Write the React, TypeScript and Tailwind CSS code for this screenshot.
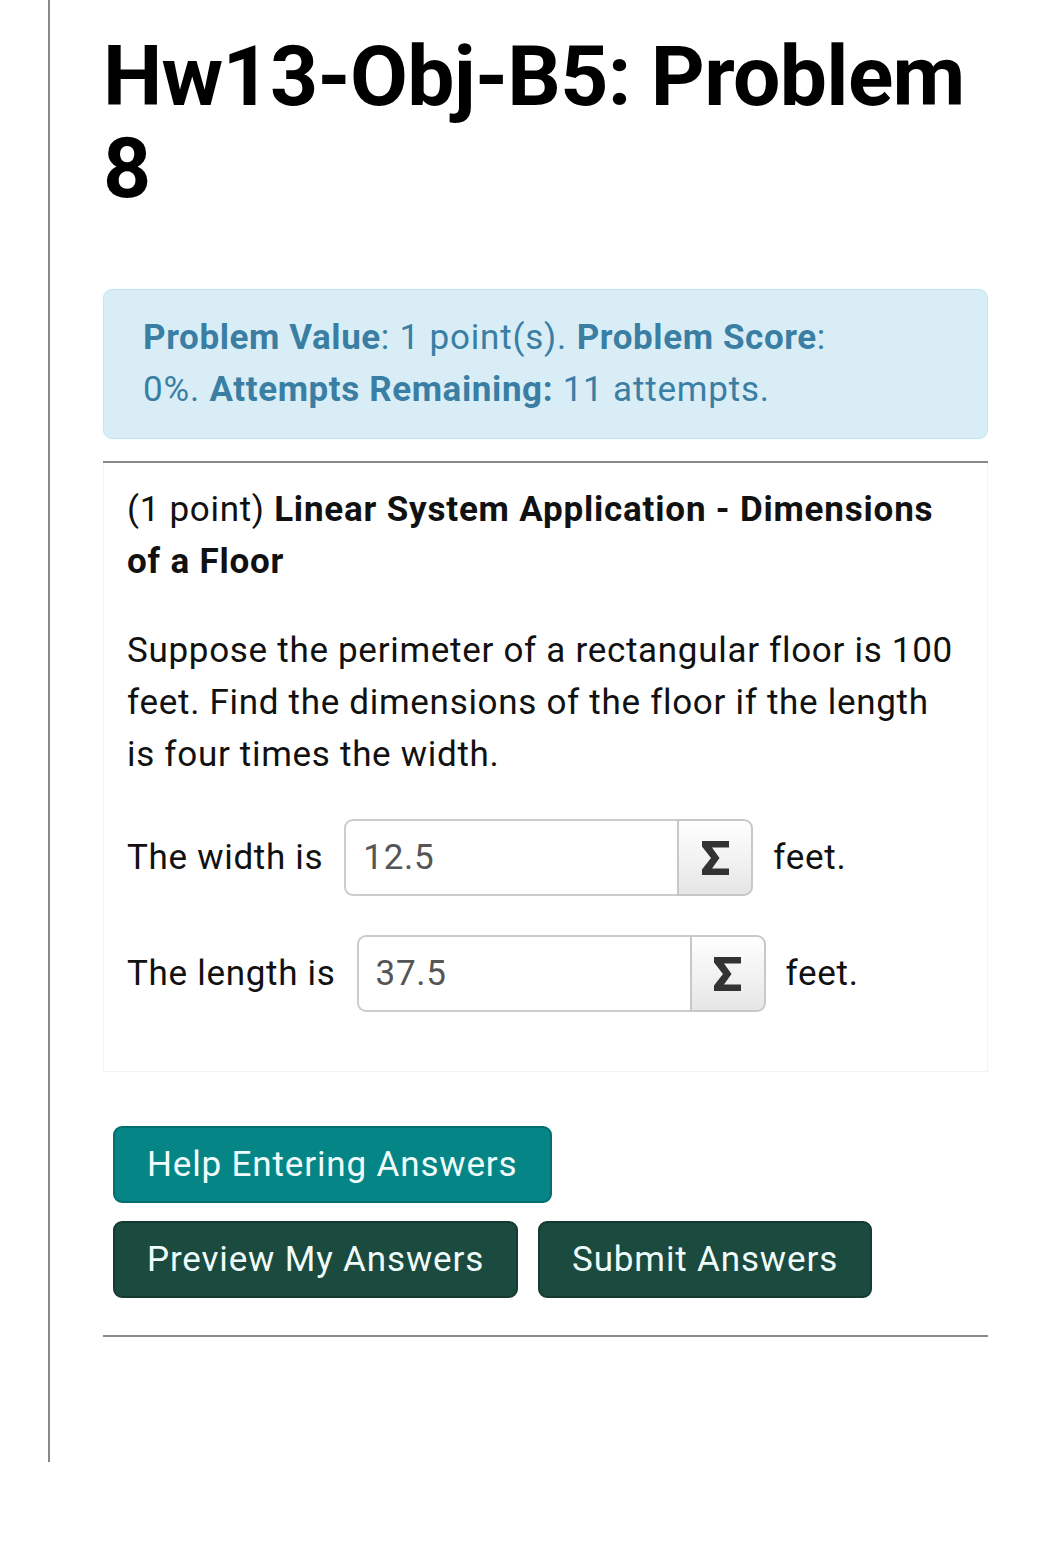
import React from "react";

function Sigma() {
  return (
    <svg width="27" height="34" viewBox="0 0 27 34" aria-hidden="true">
      <polygon
        points="0,0 27,0 27,6.5 10,6.5 17.5,17 10,27.5 27,27.5 27,34 0,34 0,28.5 9,17 0,5.5"
        fill="#333333"
      />
    </svg>
  );
}

function AnswerRow({ label, value }: { label: string; value: string }) {
  return (
    <div className="flex items-center h-[77px]">
      <span className="mr-[21px]">{label}</span>
      <div className="flex h-[77px]">
        <div className="w-[333px] h-full border-2 border-r-0 border-[#cccccc] rounded-l-[9px] flex items-center pl-[17px] text-[#555555] bg-white">
          {value}
        </div>
        <div className="w-[76px] h-full border-2 border-[#c8c8c8] rounded-r-[9px] flex items-center justify-center bg-gradient-to-b from-[#ffffff] to-[#e6e6e6]">
          <Sigma />
        </div>
      </div>
      <span className="ml-[20px]">feet.</span>
    </div>
  );
}

export default function App() {
  return (
    <div className="min-h-[1541px] bg-white font-['Roboto','Liberation_Sans',sans-serif] text-[#111111]">
      <div className="ml-[48px] border-l-2 border-[#888888] h-[1462px] pl-[53px] pr-[69px] pt-[31px]">
        <h1 className="text-[84px] leading-[92px] font-bold text-black tracking-[-0.7px]">
          Hw13-Obj-B5: Problem 8
        </h1>

        <div className="mt-[74px] bg-[#d9edf7] border border-[#bce8f1] rounded-[9px] px-[39px] py-[22px] text-[35px] leading-[52px] text-[#3a7fa3] tracking-[0.8px]">
          <b className="tracking-[0.6px]">Problem Value</b>: 1 point(s).{" "}
          <b className="tracking-[0.6px]">Problem Score</b>:
          <br />
          0%. <b className="tracking-[0.6px]">Attempts Remaining:</b> 11
          attempts.
        </div>

        <div className="mt-[22px] h-[2px] bg-[#888888]" />

        <div className="border border-t-0 border-[#f3f3f3] px-[23px] pt-[21px] pb-[59px] text-[35px] leading-[52px] tracking-[0.7px]">
          <div>
            (1 point){" "}
            <b className="tracking-[0.8px]">
              Linear System Application - Dimensions
              <br />
              of a Floor
            </b>
          </div>
          <p className="mt-[37px]">
            Suppose the perimeter of a rectangular floor is 100 feet. Find the
            dimensions of the floor if the length is four times the width.
          </p>
          <div className="mt-[38px] flex flex-col gap-[39px]">
            <AnswerRow label="The width is" value="12.5" />
            <AnswerRow label="The length is" value="37.5" />
          </div>
        </div>

        <div className="mt-[54px] pl-[10px] flex flex-col items-start gap-[18px] text-[35px] leading-[52px] tracking-[0.85px]">
          <button className="h-[77px] px-[32px] bg-[#058585] border-2 border-[#036e6e] rounded-[9px] text-[#f0fcfc]">
            Help Entering Answers
          </button>
          <div className="flex gap-[20px]">
            <button className="h-[77px] px-[32px] bg-[#1b4a3e] border-2 border-[#143a31] rounded-[9px] text-[#f0fcfc]">
              Preview My Answers
            </button>
            <button className="h-[77px] px-[32px] bg-[#1b4a3e] border-2 border-[#143a31] rounded-[9px] text-[#f0fcfc]">
              Submit Answers
            </button>
          </div>
        </div>

        <div className="mt-[37px] h-[2px] bg-[#8c8c8c]" />
      </div>
    </div>
  );
}
